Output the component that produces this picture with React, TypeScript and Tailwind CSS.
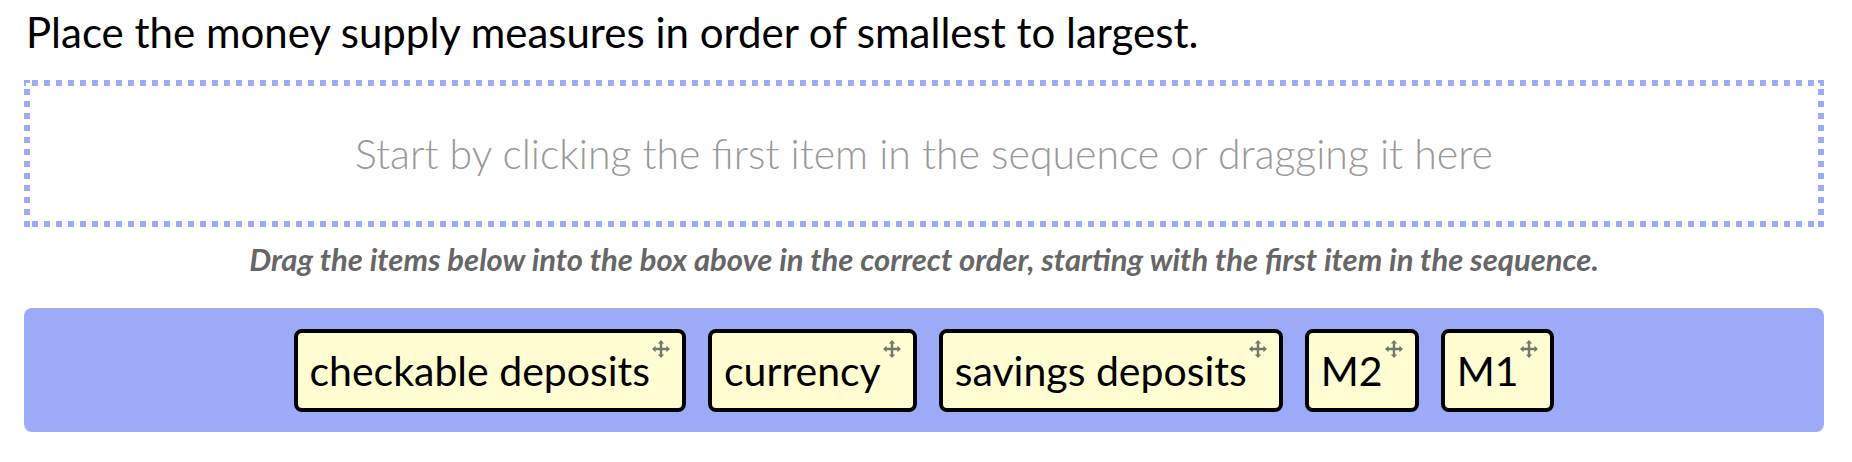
import React from "react";

function MoveIcon() {
  return (
    <svg width="18" height="18" viewBox="0 0 18 18" className="shrink-0">
      <path
        d="M9 0 L12.2 3.6 H10.2 V7.8 H14.4 V5.8 L18 9 L14.4 12.2 V10.2 H10.2 V14.4 H12.2 L9 18 L5.8 14.4 H7.8 V10.2 H3.6 V12.2 L0 9 L3.6 5.8 V7.8 H7.8 V3.6 H5.8 Z"
        fill="#6f7a68"
      />
    </svg>
  );
}

function Chip({ label }: { label: string }) {
  return (
    <div className="h-[83px] border-4 border-black rounded-lg bg-[#fffdd1] pl-3 pr-3 flex items-center">
      <span className="text-[41px] leading-none text-black">{label}</span>
      <span className="self-start mt-[7px] ml-[2px]">
        <MoveIcon />
      </span>
    </div>
  );
}

export default function App() {
  const items = ["checkable deposits", "currency", "savings deposits", "M2", "M1"];
  return (
    <div className="w-[1852px] h-[462px] bg-white pl-[24px] pr-[28px] pt-2 font-['Lato',sans-serif]">
      <h1 className="text-[42px] leading-[48px] text-black pl-[2px]">
        Place the money supply measures in order of smallest to largest.
      </h1>
      <div className="mt-6 h-[147px] flex items-center justify-center [background-image:linear-gradient(to_right,#9caaf7_50%,transparent_50%),linear-gradient(to_right,#9caaf7_50%,transparent_50%),linear-gradient(to_bottom,#9caaf7_50%,transparent_50%),linear-gradient(to_bottom,#9caaf7_50%,transparent_50%)] [background-size:12px_6px,12px_6px,6px_12px,6px_12px] [background-position:8px_0,8px_100%,0_9px,100%_9px] [background-repeat:repeat-x,repeat-x,repeat-y,repeat-y]">
        <span className="text-[41px] font-light text-[#999999]">
          Start by clicking the first item in the sequence or dragging it here
        </span>
      </div>
      <p className="mt-[17px] text-center text-[31px] leading-[30px] font-bold italic text-[#666666]">
        Drag the items below into the box above in the correct order, starting with the first item in the sequence.
      </p>
      <div className="mt-[34px] h-[124px] rounded-lg bg-[#9caaf7] flex items-center justify-center gap-[22px]">
        {items.map((it) => (
          <Chip key={it} label={it} />
        ))}
      </div>
    </div>
  );
}
